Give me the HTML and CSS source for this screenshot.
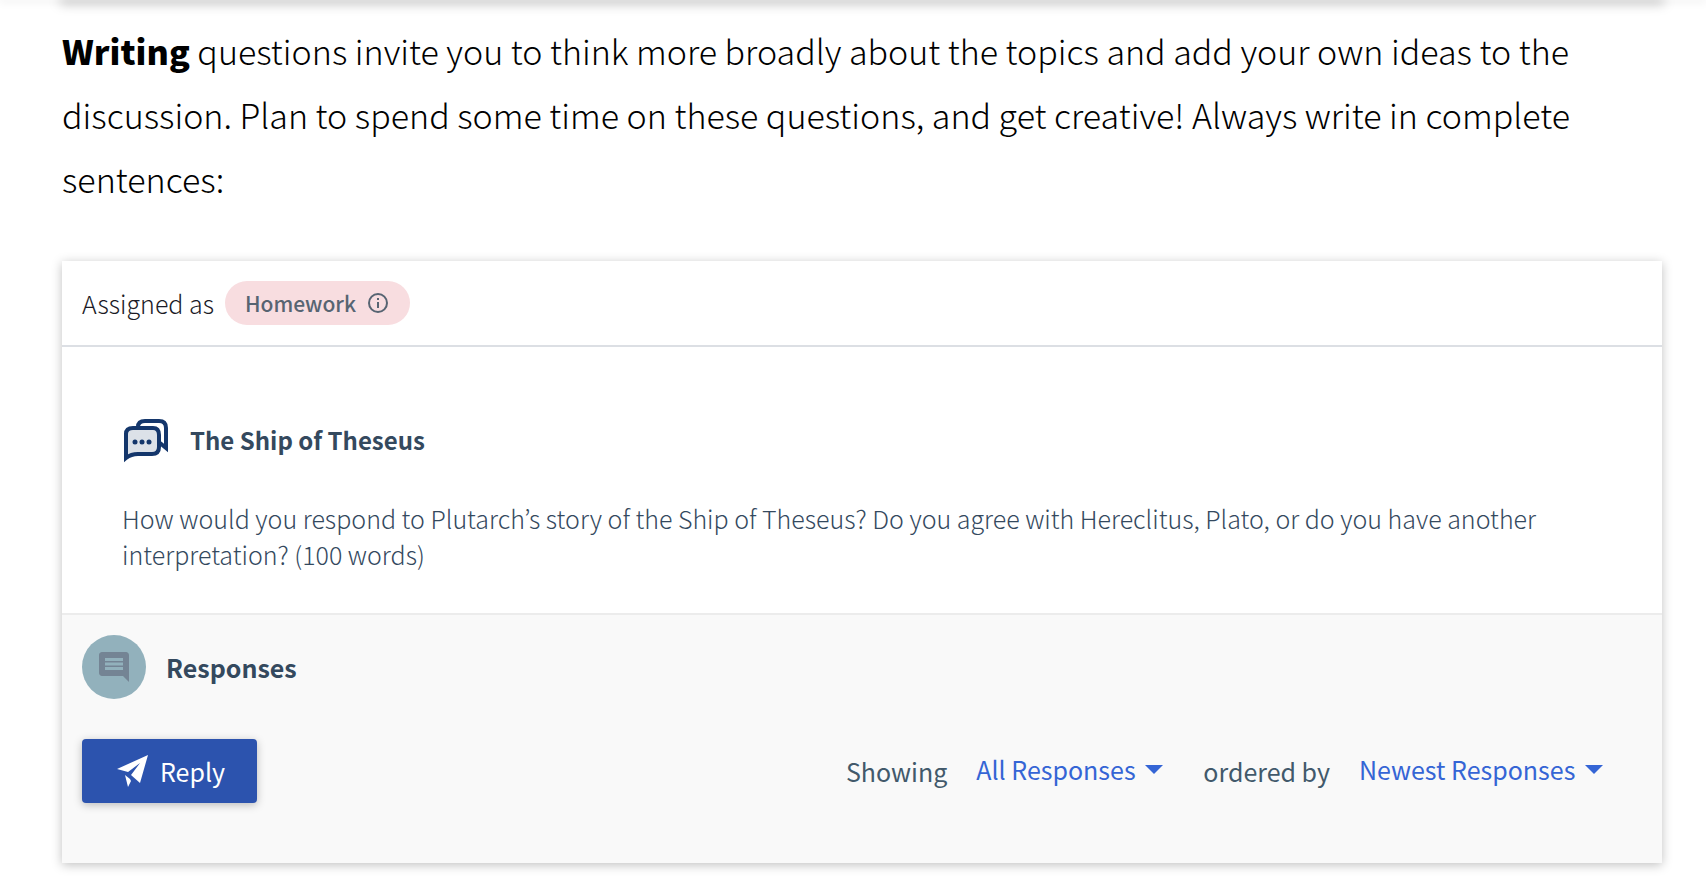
FILE: index.html
```html
<!DOCTYPE html>
<html lang="en">
<head>
  <meta charset="UTF-8" />
  <meta name="viewport" content="width=device-width, initial-scale=1.0"/>
  <title>The Ship of Theseus</title>
  <link rel="stylesheet" href="styles.css">
</head>
<body>

  <div class="topbar"></div>

  <main class="container">
    <div class="previous-card"></div>

    <p class="intro"><strong>Writing</strong> questions invite you to think more broadly about the topics and add your own ideas to the discussion. Plan to spend some time on these questions, and get creative! Always write in complete sentences:</p>

    <article class="card">
      <header class="card-header">
        <span>Assigned as</span>
        <button class="chip" type="button">
          Homework
          <svg width="24" height="24" viewBox="0 0 24 24" aria-hidden="true">
            <circle cx="12" cy="12" r="9" fill="none" stroke="currentColor" stroke-width="2"/>
            <path d="M11 7h2v2h-2zM11 11h2v6h-2z" fill="currentColor"/>
          </svg>
        </button>
      </header>

      <!-- Question -->
      <section class="question">
        <h2>
          <svg width="46" height="46" viewBox="-2 -2 46 46" aria-hidden="true">
            <path d="M14 9V8q0-6 7-6h14q7 0 7 7v20l-6-5" fill="#fff" stroke="#14366b" stroke-width="4"/>
            <path d="M2 39V15q0-6 7-6h20q6 0 6 7v12q0 7-7 7H14Q7 35 2 39z" fill="#dce1e8" stroke="#14366b" stroke-width="4"/>
            <circle cx="11" cy="23" r="2.500" fill="#14366b"/>
            <circle cx="18" cy="23" r="2.500" fill="#14366b"/>
            <circle cx="25" cy="23" r="2.500" fill="#14366b"/>
          </svg>
          The Ship of Theseus
        </h2>
        <p>How would you respond to Plutarch’s story of the Ship of Theseus? Do you agree with Hereclitus, Plato, or do you have another interpretation? (100 words)</p>
      </section>

      <!-- Responses -->
      <section class="responses">
        <h3>
          <span class="avatar">
            <svg width="36" height="36" viewBox="0 0 24 24" aria-hidden="true">
              <path d="M21.990 4c0-1.100-.89-2-1.990-2H4c-1.100 0-2 .9-2 2v12c0 1.100.9 2 2 2h14l4 4-.01-18zM18 14H6v-2h12v2zm0-3H6V9h12v2zm0-3H6V6h12v2z" fill="#748494"/>
            </svg>
          </span>
          Responses
        </h3>
        <div class="toolbar">
          <button class="reply" type="button">
            <svg width="32" height="34" viewBox="0 0 32 34" aria-hidden="true">
              <path d="M32 1L1 15l11 3L24 9 15 21l9 8zM9 21l5 4 1 2-3 6z" fill="#fff"/>
            </svg>
            Reply
          </button>
          <div class="filters">
            <label for="show">Showing</label>
            <span class="dropdown">
              <select id="show">
                <option>All Responses</option>
              </select>
            </span>
            <label for="order">ordered by</label>
            <span class="dropdown">
              <select id="order">
                <option>Newest Responses</option>
                <option>Oldest Responses</option>
              </select>
            </span>
          </div>
        </div>
      </section>
    </article>
  </main>

</body>
</html>
```
FILE: styles.css
```css
* {
  box-sizing: border-box;
}
body {
  margin: 0;
  background: #fff;
  color: #000;
  font-family: "Source Sans Pro", "Noto Sans CJK KR", sans-serif;
  font-weight: 300;
  font-size: 25px;
}
h2, h3, p {
  margin: 0;
}
button, select {
  font: inherit;
  border: none;
  cursor: pointer;
}
.topbar {
  height: 0;
  box-shadow: 0 0 8px 1px rgba(0,0,0,0.15);
}
.container {
  padding: 0 44px 24px 62px;
}
.previous-card {
  height: 0;
  box-shadow: 0 1px 12px 2px rgba(0,0,0,0.4);
}
.intro {
  padding: 19px 0 50px;
  font-size: 34px;
  line-height: 64px;
}
.intro strong {
  font-weight: 900;
}

/* ==== Card ==== */
.card {
  box-shadow: 0 2px 10px rgba(0,0,0,0.25);
}
.card-header {
  display: flex;
  align-items: center;
  gap: 11px;
  height: 86px;
  padding: 0 20px;
  border-bottom: 2px solid #dcdfe4;
  color: #1b1b26;
}
.chip {
  display: flex;
  align-items: center;
  gap: 10px;
  height: 44px;
  padding: 0 20px;
  border-radius: 22px;
  background: #f8dde0;
  color: #576472;
  font-size: 21px;
  font-weight: 500;
}
.question {
  padding: 70px 60px 41px;
  color: #34495e;
  line-height: 36px;
}
.question h2 {
  display: flex;
  align-items: center;
  gap: 22px;
  margin-bottom: 37px;
  font-size: 24px;
  font-weight: 700;
}

/* ==== Responses ==== */
.responses {
  padding: 20px 20px 60px;
  border-top: 2px solid #ececec;
  background: #f9f9f9;
  color: #34495e;
}
.responses h3 {
  display: flex;
  align-items: center;
  gap: 20px;
  margin-bottom: 40px;
  font-size: 25px;
  font-weight: 700;
}
.avatar {
  display: flex;
  align-items: center;
  justify-content: center;
  width: 64px;
  height: 64px;
  border-radius: 50%;
  background: #92b1bc;
}
.toolbar {
  display: flex;
  align-items: center;
  justify-content: space-between;
}
.reply {
  display: flex;
  align-items: center;
  gap: 12px;
  height: 64px;
  padding: 0 32px 0 34px;
  border-radius: 4px;
  background: #2c53ae;
  color: #fff;
  font-weight: 400;
  box-shadow: 0 2px 8px rgba(0,0,0,0.25);
}
.filters {
  display: flex;
  align-items: center;
  padding-right: 39px;
  color: #42596b;
  font-weight: 400;
}
.dropdown {
  display: flex;
  align-items: center;
  gap: 9px;
  margin: 0 40px 0 29px;
  padding-bottom: 4px;
  color: #3565d5;
}
.dropdown:last-child {
  margin-right: 0;
}
.dropdown::after {
  content: "";
  border: 9px solid transparent;
  border-top-color: #3565d5;
  border-bottom: none;
}
.dropdown select {
  appearance: none;
  padding: 0;
  background: none;
  color: inherit;
}
```
